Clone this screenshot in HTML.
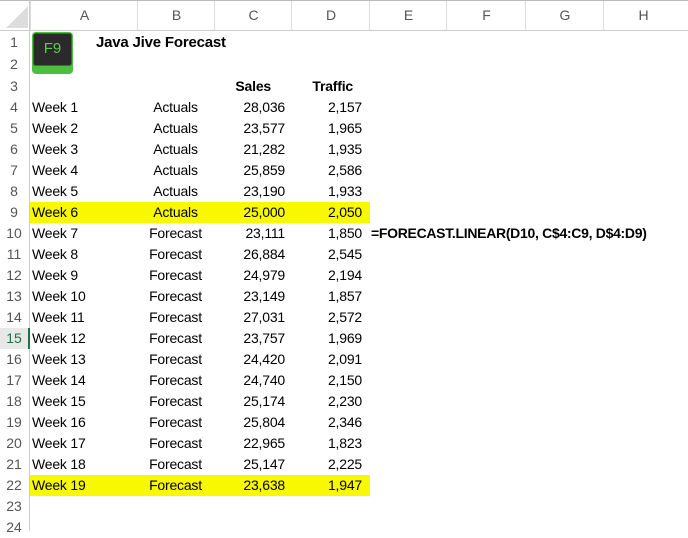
<!DOCTYPE html>
<html><head><meta charset="utf-8"><style>
body{margin:0;width:688px;height:531px;overflow:hidden;background:#fff;font-family:"Liberation Sans",sans-serif;position:relative;color:#000}
.t{position:absolute;font-size:14px;line-height:21px;white-space:nowrap;letter-spacing:-0.2px}
.h{position:absolute;top:1px;height:29px;line-height:29px;text-align:center;color:#555;font-size:14px;border-left:1px solid #ddd}
.rn{position:absolute;left:0;width:28px;text-align:center;color:#555;font-size:14px;line-height:21px}
.r{text-align:right}
.b{font-weight:bold}
</style></head><body>
<div style="position:absolute;left:0;top:0;width:688px;height:1px;background:#bbb"></div>
<div style="position:absolute;left:0;top:30px;width:688px;height:1px;background:#ccc"></div>
<div style="position:absolute;left:29px;top:0;width:1px;height:531px;background:#ccc"></div>
<svg style="position:absolute;left:6px;top:6px" width="22" height="22"><polygon points="22,0 22,22 0,22" fill="#ddd"/></svg>
<div class="h" style="left:30px;width:107px">A</div>
<div class="h" style="left:137px;width:77px">B</div>
<div class="h" style="left:214px;width:77px">C</div>
<div class="h" style="left:291px;width:78px">D</div>
<div class="h" style="left:369px;width:77px">E</div>
<div class="h" style="left:446px;width:79px">F</div>
<div class="h" style="left:525px;width:78px">G</div>
<div class="h" style="left:603px;width:79px">H</div>
<div style="position:absolute;left:0;top:328px;width:29px;height:21px;background:#e8e8e8"></div>
<div style="position:absolute;left:28px;top:328px;width:2px;height:21px;background:#1e7145"></div>
<div style="position:absolute;left:30px;top:202px;width:340px;height:21px;background:#f8f800"></div>
<div style="position:absolute;left:30px;top:475px;width:340px;height:21px;background:#f8f800"></div>
<div style="position:absolute;left:32px;top:32px;width:41px;height:42px;border-radius:4px;background:#4cbf3f"></div>
<div style="position:absolute;left:33px;top:33px;width:39px;height:33px;border-radius:3px;background:#2a2a2a;box-shadow:inset 0 0 0 1px #3f6a3a;color:#5fc94f;font-size:15px;text-align:center;line-height:32px">F9</div>
<div id="rows"></div>
<script>
var d=[["Week 1","Actuals","28,036","2,157"],["Week 2","Actuals","23,577","1,965"],["Week 3","Actuals","21,282","1,935"],["Week 4","Actuals","25,859","2,586"],["Week 5","Actuals","23,190","1,933"],["Week 6","Actuals","25,000","2,050"],["Week 7","Forecast","23,111","1,850"],["Week 8","Forecast","26,884","2,545"],["Week 9","Forecast","24,979","2,194"],["Week 10","Forecast","23,149","1,857"],["Week 11","Forecast","27,031","2,572"],["Week 12","Forecast","23,757","1,969"],["Week 13","Forecast","24,420","2,091"],["Week 14","Forecast","24,740","2,150"],["Week 15","Forecast","25,174","2,230"],["Week 16","Forecast","25,804","2,346"],["Week 17","Forecast","22,965","1,823"],["Week 18","Forecast","25,147","2,225"],["Week 19","Forecast","23,638","1,947"]];
var h="";var tops=[0,32,54,76];
for(var n=1;n<=24;n++){var y=n<=3?tops[n]:97+(n-4)*21;h+='<div class="rn" style="top:'+y+'px;'+(n==15?'color:#1e7145':'')+'">'+n+'</div>';}
for(var i=0;i<d.length;i++){var y=97+i*21;var r=d[i];
h+='<div class="t" style="left:32px;top:'+y+'px">'+r[0]+'</div>';
h+='<div class="t" style="left:137px;width:77px;text-align:center;top:'+y+'px">'+r[1]+'</div>';
h+='<div class="t r" style="left:214px;width:71px;top:'+y+'px">'+r[2]+'</div>';
h+='<div class="t r" style="left:291px;width:71px;top:'+y+'px">'+r[3]+'</div>';}
document.getElementById("rows").innerHTML=h;
</script>
<div class="t b" style="left:96px;top:32px;font-size:15px">Java Jive Forecast</div>
<div class="t b r" style="left:214px;width:57px;top:76px">Sales</div>
<div class="t b r" style="left:291px;width:62px;top:76px">Traffic</div>
<div class="t b" style="left:371px;top:223px;letter-spacing:-0.3px">=FORECAST.LINEAR(D10, C$4:C9, D$4:D9)</div>
</body></html>
